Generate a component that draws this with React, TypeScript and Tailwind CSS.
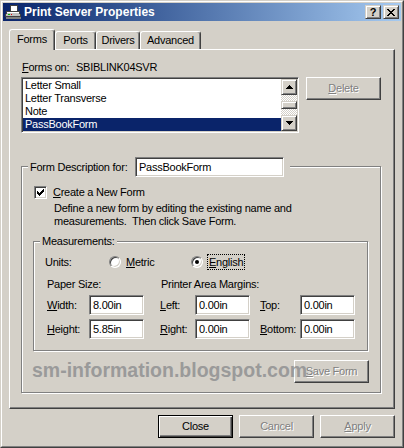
import React from "react";

// Win2000 bevels
const raised =
  "border border-t-white border-l-white border-r-[#404040] border-b-[#404040] shadow-[inset_-1px_-1px_0_#808080]";
const sunken =
  "border border-t-[#808080] border-l-[#808080] border-r-white border-b-white shadow-[inset_1px_1px_0_#404040,inset_-1px_-1px_0_#d4d0c8]";
const etched = "border border-[#808080] shadow-[inset_1px_1px_0_#fff,1px_1px_0_#fff]";
const smallBtn =
  "border border-t-[#d4d0c8] border-l-[#d4d0c8] border-r-[#404040] border-b-[#404040] shadow-[inset_1px_1px_0_#fff,inset_-1px_-1px_0_#808080] bg-[#d4d0c8] flex items-center justify-center";
const disabled = "text-[#808080] [text-shadow:1px_1px_0_#fff]";

function PrinterIcon() {
  return (
    <svg width="16" height="16" viewBox="0 0 16 16" shapeRendering="crispEdges">
      <path d="M5 1h7v6H5z" fill="#fff" stroke="#404040" strokeWidth="1" />
      <path d="M1.5 7.5h13l1 5h-15z" fill="#c0c0c0" stroke="#404040" strokeWidth="1" />
      <path d="M2 8h12v1H2z" fill="#fff" />
      <path d="M3 10h2v1H3z" fill="#00c000" />
      <path d="M6 10h1v1H6z" fill="#e00000" />
      <path d="M1 13h15v2H1z" fill="#808080" />
    </svg>
  );
}

function Field({ value, w }: { value: string; w: string }) {
  return (
    <div className={`${sunken} ${w} h-[20px] bg-white flex items-center pl-[3px]`}>{value}</div>
  );
}

function Radio({ on }: { on?: boolean }) {
  return (
    <span className="w-[12px] h-[12px] shrink-0 rounded-full bg-white border border-t-[#808080] border-l-[#808080] border-r-white border-b-white shadow-[inset_1px_1px_0_#404040,inset_-1px_-1px_0_#d4d0c8] flex items-center justify-center">
      {on && <span className="w-[4px] h-[4px] rounded-full bg-black" />}
    </span>
  );
}

function Button({ children, off, w = "w-[75px]" }: { children: React.ReactNode; off?: boolean; w?: string }) {
  return (
    <div className={`${raised} ${w} h-[23px] flex items-center justify-center ${off ? disabled : ""}`}>
      {children}
    </div>
  );
}

const items = ["Letter Small", "Letter Transverse", "Note", "PassBookForm"];

export default function App() {
  return (
    <div className="w-[404px] h-[448px] bg-[#d4d0c8] font-['Liberation_Sans',Arial,sans-serif] text-[11px] leading-[13px] tracking-[-0.25px] text-black border border-t-[#d4d0c8] border-l-[#d4d0c8] border-r-[#404040] border-b-[#404040]">
      <div className="h-full flex flex-col p-px border border-t-white border-l-white border-r-[#808080] border-b-[#808080]">
        {/* Title bar */}
        <div className="h-[18px] shrink-0 flex items-center bg-linear-to-r from-[#0a246a] to-[#a6caf0] pl-[2px] pr-[2px]">
          <PrinterIcon />
          <span className="ml-[3px] text-white font-bold text-[12px] tracking-normal">Print Server Properties</span>
          <div className="ml-auto flex gap-[2px]">
            <div className={`${smallBtn} w-[16px] h-[14px] font-bold text-[11px] leading-none tracking-normal`}>?</div>
            <div className={`${smallBtn} w-[16px] h-[14px]`}>
              <svg width="8" height="7" viewBox="0 0 8 7" shapeRendering="crispEdges">
                <path d="M0 0h2v1H0zM1 1h2v1H1zM2 2h2v1H2zM3 3h2v1H3zM2 4h2v1H2zM1 5h2v1H1zM0 6h2v1H0zM6 0h2v1H6zM5 1h2v1H5zM4 2h2v1H4zM4 4h2v1H4zM5 5h2v1H5zM6 6h2v1H6z" fill="#000" />
              </svg>
            </div>
          </div>
        </div>

        <div className="flex-1 px-[6px] pt-[8px]">
          {/* Tabs */}
          <div className="h-[21px] flex items-end -mb-px relative z-10">
            <div className="w-[46px] h-[21px] bg-[#d4d0c8] rounded-t-[3px] border-t border-l border-r border-t-white border-l-white border-r-[#404040] shadow-[inset_-1px_0_0_#808080] flex items-center justify-center pb-[2px]">
              Forms
            </div>
            {[
              ["Ports", "w-[41px]"],
              ["Drivers", "w-[44px]"],
              ["Advanced", "w-[61px]"],
            ].map(([t, w]) => (
              <div
                key={t}
                className={`${w} h-[18px] mb-px rounded-t-[3px] border-t border-l border-r border-t-white border-l-white border-r-[#404040] shadow-[inset_-1px_0_0_#808080] flex items-center justify-center`}
              >
                {t}
              </div>
            ))}
          </div>

          {/* Panel */}
          <div className={`${raised} h-[360px] pl-[11px] pt-[11px]`}>
            <div className="flex h-[13px] pl-px">
              <span className="w-[54px]">
                <u>F</u>orms on:
              </span>
              <span>SBIBLINK04SVR</span>
            </div>

            <div className="flex gap-[7px] mt-[3px]">
              <div className={`${sunken} w-[278px] h-[56px] bg-white p-px flex`}>
                <div className="flex-1 flex flex-col">
                  {items.map((it, i) => (
                    <div
                      key={it}
                      className={`h-[13px] pl-[2px] ${i === 3 ? "bg-[#0a246a] text-white" : ""}`}
                    >
                      {it}
                    </div>
                  ))}
                </div>
                <div className="w-[16px] flex flex-col">
                  <div className={`${smallBtn} h-[16px]`}>
                    <svg width="7" height="4" viewBox="0 0 7 4" shapeRendering="crispEdges">
                      <path d="M3 0h1v1H3zM2 1h3v1H2zM1 2h5v1H1zM0 3h7v1H0z" fill="#000" />
                    </svg>
                  </div>
                  <div className="flex-1 bg-[image:repeating-conic-gradient(#fff_0_25%,#d4d0c8_0_50%)] bg-[length:2px_2px] pt-[6px]">
                    <div className={`${smallBtn} h-[8px]`} />
                  </div>
                  <div className={`${smallBtn} h-[16px]`}>
                    <svg width="7" height="4" viewBox="0 0 7 4" shapeRendering="crispEdges">
                      <path d="M0 0h7v1H0zM1 1h5v1H1zM2 2h3v1H2zM3 3h1v1H3z" fill="#000" />
                    </svg>
                  </div>
                </div>
              </div>
              <Button off>
                <span>
                  <u>D</u>elete
                </span>
              </Button>
            </div>

            {/* Form description group */}
            <div className={`${etched} relative w-[360px] h-[227px] mt-[33px]`}>
              <div className="absolute top-[-10px] left-[6px] pl-[2px] pr-[6px] bg-[#d4d0c8] flex items-center">
                <span className="w-[105px]">Form Description for:</span>
                <Field value="PassBookForm" w="w-[149px]" />
              </div>

              <div className="pl-[11px] pt-[19px]">
                <div className="h-[13px] flex items-center gap-[6px] pl-px">
                  <span className={`${sunken} w-[13px] h-[13px] bg-white flex items-center justify-center`}>
                    <svg width="7" height="7" viewBox="0 0 7 7" shapeRendering="crispEdges">
                      <path d="M0 2h1v3H0zM1 3h1v3H1zM2 4h1v3H2zM3 3h1v3H3zM4 2h1v3H4zM5 1h1v3H5zM6 0h1v3H6z" fill="#000" />
                    </svg>
                  </span>
                  <span>
                    <u>C</u>reate a New Form
                  </span>
                </div>
                <div className="pl-[21px] mt-[3px]">
                  <div>Define a new form by editing the existing name and</div>
                  <div>measurements.&nbsp; Then click Save Form.</div>
                </div>

                {/* Measurements group */}
                <div className={`${etched} relative w-[335px] h-[110px] mt-[13px]`}>
                  <span className="absolute top-[-7px] left-[6px] px-[2px] bg-[#d4d0c8]">Measurements:</span>
                  <div className="pl-[11px] pt-[12px]">
                    <div className="h-[16px] flex items-center">
                      <span className="w-[64px]">Units:</span>
                      <div className="w-[82px] flex items-center gap-[5px]">
                        <Radio />
                        <span>
                          <u>M</u>etric
                        </span>
                      </div>
                      <div className="flex items-center gap-[4px]">
                        <Radio on />
                        <span className="border border-dotted border-black px-px h-[16px] flex items-center">
                          <span>
                            <u>E</u>nglish
                          </span>
                        </span>
                      </div>
                    </div>

                    <div className="h-[13px] mt-[8px] pl-[2px] flex">
                      <span className="w-[114px]">Paper Size:</span>
                      <span>Printer Area Margins:</span>
                    </div>

                    {[
                      ["W", "idth:", "8.00in", "L", "eft:", "T", "op:"],
                      ["H", "eight:", "5.85in", "R", "ight:", "B", "ottom:"],
                    ].map(([a, ar, v, b, br, c, cr]) => (
                      <div key={a} className="h-[20px] mt-[4px] pl-[2px] flex items-center">
                        <span className="w-[42px]">
                          <u>{a}</u>
                          {ar}
                        </span>
                        <Field value={v} w="w-[55px]" />
                        <span className="w-[35px] ml-[16px]">
                          <u>{b}</u>
                          {br}
                        </span>
                        <Field value="0.00in" w="w-[55px]" />
                        <span className="w-[40px] ml-[10px]">
                          <u>{c}</u>
                          {cr}
                        </span>
                        <Field value="0.00in" w="w-[55px]" />
                      </div>
                    ))}
                  </div>
                </div>

                <div className="mt-[9px] ml-[261px]">
                  <Button off>
                    <span>
                      <u>S</u>ave Form
                    </span>
                  </Button>
                </div>
              </div>

              {/* watermark over the group */}
              <span className="absolute left-[10px] top-[192px] text-[19.5px] leading-[22px] font-bold tracking-normal text-[#9a9a9a]">
                sm-information.blogspot.com
              </span>
            </div>
          </div>

          {/* Bottom buttons */}
          <div className="flex justify-end gap-[6px] mt-[6px]">
            <div className="w-[75px] h-[23px] border border-black shadow-[inset_1px_1px_0_#fff,inset_-1px_-1px_0_#404040,inset_-2px_-2px_0_#808080] flex items-center justify-center">
              Close
            </div>
            <Button off>Cancel</Button>
            <Button off>
              <span>
                <u>A</u>pply
              </span>
            </Button>
          </div>
        </div>
      </div>
    </div>
  );
}
